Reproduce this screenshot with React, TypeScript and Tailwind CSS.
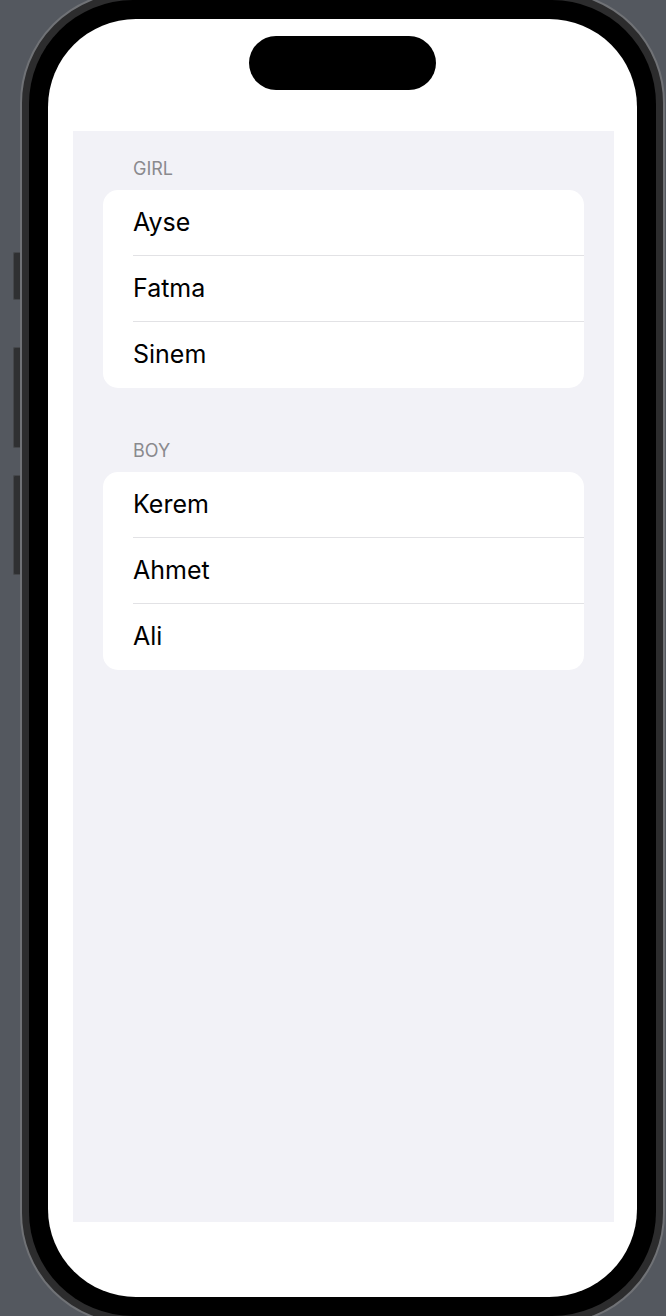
const sections = [
  { title: "GIRL", names: ["Ayse", "Fatma", "Sinem"] },
  { title: "BOY", names: ["Kerem", "Ahmet", "Ali"] },
];

function SideButtons() {
  return (
    <div className="flex w-[7px] shrink-0 flex-col">
      <div className="mt-[252px] h-[48px] rounded-l-[2px] border border-r-0 border-[#45474b] bg-[#2f3032]" />
      <div className="mt-[47px] h-[101px] rounded-l-[2px] border border-r-0 border-[#45474b] bg-[#2f3032]" />
      <div className="mt-[27px] h-[100px] rounded-l-[2px] border border-r-0 border-[#45474b] bg-[#2f3032]" />
    </div>
  );
}

function Section({ title, names }: { title: string; names: string[] }) {
  return (
    <div>
      <div className="h-[28px] pl-[60px] text-[18px] leading-[28px] text-[#8a8a8e]">{title}</div>
      <div className="mx-[30px] mt-[7px] overflow-hidden rounded-[15px] bg-white">
        {names.map((name, i) => (
          <div key={name} className="flex h-[66px] pl-[30px]">
            <div
              className={
                i < names.length - 1
                  ? "flex flex-1 items-center border-b border-[#e2e2e5] text-[25px] text-black"
                  : "flex flex-1 items-center text-[25px] text-black"
              }
            >
              {name}
            </div>
          </div>
        ))}
      </div>
    </div>
  );
}

export default function App() {
  return (
    <div
      className="flex h-[1316px] w-[666px] overflow-hidden bg-[#54585f] pl-[13px]"
      style={{ fontFamily: "Inter, 'Noto Sans', sans-serif" }}
    >
      <SideButtons />
      <div className="-mt-[9px] h-[1334px] w-[645px] shrink-0 rounded-[112px] border-2 border-[#707276] bg-[#2c2c2d] p-[7px]">
        <div className="h-full w-full rounded-[104px] bg-black p-[19px]">
          <div className="flex h-full w-full flex-col rounded-[88px] bg-white">
            <div className="mx-auto mt-[17px] h-[54px] w-[187px] rounded-full bg-black" />
            <div className="ml-[25px] mt-[41px] h-[1091px] w-[541px] bg-[#f2f2f7] pt-[24px]">
              <div className="flex flex-col gap-[49px]">
                {sections.map((s) => (
                  <Section key={s.title} title={s.title} names={s.names} />
                ))}
              </div>
            </div>
          </div>
        </div>
      </div>
    </div>
  );
}
